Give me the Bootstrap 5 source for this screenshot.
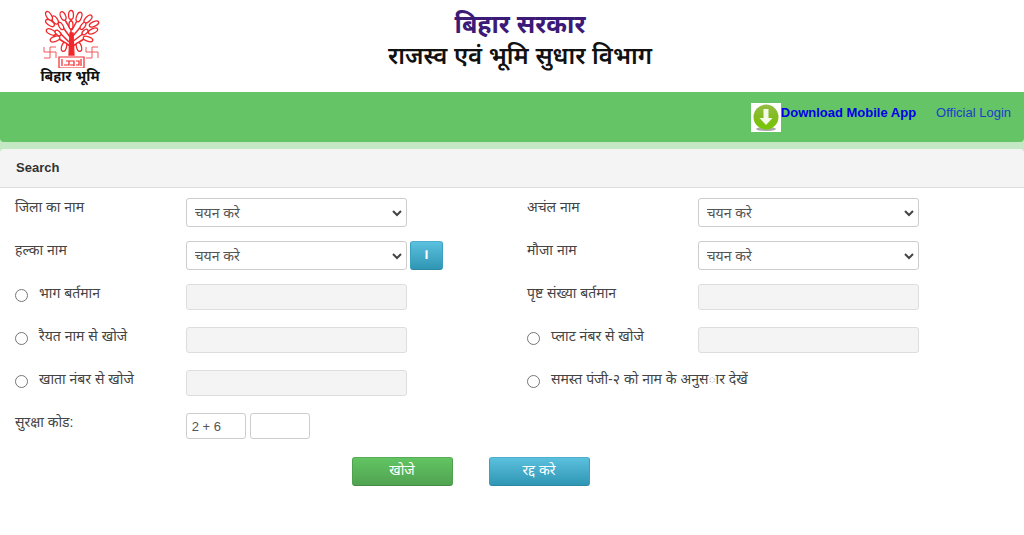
<!DOCTYPE html>
<html lang="hi">
<head>
<meta charset="utf-8">
<meta name="viewport" content="width=device-width, initial-scale=1">
<title>बिहार भूमि</title>
<link href="https://cdn.jsdelivr.net/npm/bootstrap@5.3.0/dist/css/bootstrap.min.css" rel="stylesheet">
<style>
body{font-family:"Liberation Sans","Noto Sans Devanagari","Noto Sans",sans-serif;font-size:14px;line-height:20px;color:#444;background:#fff}
.masthead{height:92px}
.brand-mark{width:60px;margin-left:40px;padding-top:8px}
.brand-name{font-size:14px;line-height:16px;font-weight:700;color:#111}
.dept{padding:8px 0 0 16px}
.dept-gov{font-size:25px;line-height:32px;font-weight:700;color:#3c1a78}
.dept-name{font-size:24px;line-height:32px;font-weight:600;color:#111}
.topbar{height:50px;background:#64c466;border-radius:0 0 4px 4px;font-size:13px;padding:7px 9px 0 0}
.topbar a{color:#1a3fc4;line-height:20px}
.topbar a.app-link{color:#0000e6}
.band{background:#c3e8c3;padding-top:7px}
.panel-top{height:39px;background:#f4f4f4;border-bottom:1px solid #ddd;border-radius:4px 4px 0 0;padding:9px 16px;font-weight:700;color:#333;margin:0;font-size:13px;line-height:20px}
.cell{padding-left:15px}
.line{height:43px}
.search-form{padding-top:9px}
.ctrl{padding-top:1px}
.text-label{font-size:14px;line-height:20px}
.form-select,.form-control{font-size:14px;line-height:20px;color:#555;border-color:#ccc;border-radius:3px;padding:0 8px;box-shadow:none}
.form-select{height:29px;background-size:12px 12px;background-position:right 3px center;background-image:url("data:image/svg+xml,%3Csvg xmlns='http://www.w3.org/2000/svg' viewBox='0 0 12 12'%3E%3Cpath d='M2 4l4 4 4-4' fill='none' stroke='%23444' stroke-width='2'/%3E%3C/svg%3E")}
.form-control{height:26px;padding:0 5px;font-size:13px}
.form-control:disabled{background:#f4f4f4;border-color:#ddd}
.field{width:221px}
.code{width:60px}
.pick{width:13px;height:13px;margin:6px 11px 0 0}
.btn{font-size:14px;line-height:20px;height:29px;color:#fff;border-radius:3px;padding:0 0 4px;border:1px solid}
.btn-find{background:linear-gradient(#62c462,#51a351);border-color:#57ab57 #4fa14f #458c45}
.btn-sky{background:linear-gradient(#5bc0de,#2f96b4);border-color:#4db0ce #3aa0bf #2b89a5}
.btn-wide{width:101px}
.btn-info-mark{width:33px;font-weight:700}
.info-group{gap:3px}
.actions{gap:36px;margin-right:83px;padding-top:2px}
</style>
</head>
<body>
<header class="masthead row g-0">
  <div class="col-2">
    <div class="brand-mark text-center">
      <svg width="60" height="60" viewBox="0 0 60 60" class="d-block" fill="none" stroke="#f0282c" stroke-width="1.3" aria-hidden="true">
        <path d="M31 47V12M29 34L17 22M30 38L13 27M30 29L19 14M31 22l-6-10M32 29l12-14M32 34l16-12M33 38l14-9M32 22l6-11" stroke-width="1.5"/>
        <path d="M29 47l1-22h3l1 22z" fill="#f0282c"/>
        <g fill="#fff">
          <ellipse cx="31" cy="7" rx="2.500" ry="4.500"/>
          <ellipse cx="31" cy="17" rx="2" ry="4"/>
          <ellipse cx="23" cy="8" rx="2.500" ry="4.500" transform="rotate(-25 23 8)"/>
          <ellipse cx="15" cy="12" rx="2.500" ry="4.500" transform="rotate(-35 15 12)"/>
          <ellipse cx="9" cy="8" rx="2.500" ry="5" transform="rotate(-30 9 8)"/>
          <ellipse cx="10" cy="15" rx="2.500" ry="5" transform="rotate(-55 10 15)"/>
          <ellipse cx="21" cy="18" rx="2" ry="4" transform="rotate(-30 21 18)"/>
          <ellipse cx="11" cy="24" rx="2.500" ry="5" transform="rotate(-65 11 24)"/>
          <ellipse cx="18" cy="25" rx="2" ry="3.500" transform="rotate(-50 18 25)"/>
          <ellipse cx="15" cy="31" rx="2.500" ry="5" transform="rotate(70 15 31)"/>
          <ellipse cx="24" cy="39" rx="2.500" ry="4.500" transform="rotate(15 24 39)"/>
          <ellipse cx="39" cy="9" rx="2.500" ry="5" transform="rotate(20 39 9)"/>
          <ellipse cx="48" cy="11" rx="2.500" ry="5" transform="rotate(45 48 11)"/>
          <ellipse cx="54" cy="16" rx="2.300" ry="5" transform="rotate(65 54 16)"/>
          <ellipse cx="43" cy="18" rx="2" ry="4" transform="rotate(35 43 18)"/>
          <ellipse cx="53" cy="23" rx="2.300" ry="5" transform="rotate(65 53 23)"/>
          <ellipse cx="45" cy="24" rx="2" ry="3.500" transform="rotate(50 45 24)"/>
          <ellipse cx="48" cy="31" rx="2.300" ry="5" transform="rotate(-70 48 31)"/>
          <ellipse cx="39" cy="39" rx="2.500" ry="4.500" transform="rotate(-15 39 39)"/>
        </g>
        <g stroke-width="1" stroke="#f2575a">
          <path d="M10 39v11M4 44h12M10 39h6M16 44v6M10 50H4M4 44v-5"/>
          <path d="M52 39v11M46 44h12M52 39h6M58 44v6M52 50h-6M46 44v-5"/>
        </g>
        <path d="M19 49h25v11H19zM22 51v7M41 51v7M24 57h5v-4h-3M29 53h5v4h-4M34 53v5M36 57h3v-4h-3" stroke-width="1.200"/>
      </svg>
      <div class="brand-name text-nowrap">बिहार भूमि</div>
    </div>
  </div>
  <div class="col-8 text-center dept">
    <div class="dept-gov">बिहार सरकार</div>
    <div class="dept-name">राजस्व एवं भूमि सुधार विभाग</div>
  </div>
</header>

<div class="band pt-0">
  <nav class="topbar d-flex justify-content-end align-items-start">
    <a href="#" class="app-link d-flex text-decoration-none fw-bold me-3">
      <svg class="mt-1" width="30" height="29" viewBox="0 0 30 29" aria-hidden="true">
        <defs><linearGradient id="lime" x2="0" y2="1"><stop stop-color="#94bd45"/><stop offset=".5" stop-color="#82bb20"/><stop offset="1" stop-color="#75c800"/></linearGradient></defs>
        <path fill="#fff" d="M0 0h30v29H0z"/>
        <ellipse cx="15" cy="26" rx="10" ry="2" fill="#aaa"/>
        <circle cx="15" cy="14" r="12.5" fill="url(#lime)"/>
        <path d="M12.500 6h5v9h4L15 22l-6.500-7h4z" fill="#f4faea"/>
      </svg>
      <span class="mt-1">Download Mobile App</span>
    </a>
    <a href="#" class="text-decoration-none mt-1 mx-1">Official Login</a>
  </nav>
</div>

<main>
  <div class="band"><h1 class="panel-top">Search</h1></div>
  <form class="search-form">
    <div class="row g-0 line">
      <label class="col-2 cell text-label" for="district">जिला का नाम</label>
      <div class="col-4 cell ctrl"><select class="form-select field" id="district"><option>चयन करे</option></select></div>
      <label class="col-2 cell text-label" for="circle">अचंल नाम</label>
      <div class="col-4 cell ctrl"><select class="form-select field" id="circle"><option>चयन करे</option></select></div>
    </div>
    <div class="row g-0 line">
      <label class="col-2 cell text-label" for="halka">हल्का नाम</label>
      <div class="col-4 cell ctrl d-flex info-group"><select class="form-select field" id="halka"><option>चयन करे</option></select><button type="button" class="btn btn-sky btn-info-mark">।</button></div>
      <label class="col-2 cell text-label" for="mauja">मौजा नाम</label>
      <div class="col-4 cell ctrl"><select class="form-select field" id="mauja"><option>चयन करे</option></select></div>
    </div>
    <div class="row g-0 line">
      <div class="col-2 cell d-flex align-items-start"><input class="pick" type="radio" name="mode" id="m1"><label class="text-label" for="m1">भाग बर्तमान</label></div>
      <div class="col-4 cell ctrl"><input class="form-control field" disabled aria-label="भाग बर्तमान"></div>
      <label class="col-2 cell text-label" for="pageno">पृष्ट संख्या बर्तमान</label>
      <div class="col-4 cell ctrl"><input class="form-control field" disabled id="pageno"></div>
    </div>
    <div class="row g-0 line">
      <div class="col-2 cell d-flex align-items-start"><input class="pick" type="radio" name="mode" id="m2"><label class="text-label" for="m2">रैयत नाम से खोजे</label></div>
      <div class="col-4 cell ctrl"><input class="form-control field" disabled aria-label="रैयत नाम"></div>
      <div class="col-2 cell d-flex align-items-start"><input class="pick" type="radio" name="mode" id="m3"><label class="text-label" for="m3">प्लाट नंबर से खोजे</label></div>
      <div class="col-4 cell ctrl"><input class="form-control field" disabled aria-label="प्लाट नंबर"></div>
    </div>
    <div class="row g-0 line">
      <div class="col-2 cell d-flex align-items-start"><input class="pick" type="radio" name="mode" id="m4"><label class="text-label" for="m4">खाता नंबर से खोजे</label></div>
      <div class="col-4 cell ctrl"><input class="form-control field" disabled aria-label="खाता नंबर"></div>
      <div class="col-6 cell d-flex align-items-start"><input class="pick" type="radio" name="mode" id="m5"><label class="text-label" for="m5">समस्त पंजी-२ को नाम के अनुस◌ार देखें</label></div>
    </div>
    <div class="row g-0 line">
      <label class="col-2 cell text-label" for="answer">सुरक्षा कोड:</label>
      <div class="col-4 cell ctrl d-flex align-items-start"><input class="form-control code me-1" value="2 + 6" aria-label="कोड" readonly><input class="form-control code" id="answer"></div>
    </div>
    <div class="actions d-flex justify-content-center">
      <button type="submit" class="btn btn-find btn-wide">खोजे</button>
      <button type="reset" class="btn btn-sky btn-wide">रद्द करे</button>
    </div>
  </form>
</main>
<script src="https://cdn.jsdelivr.net/npm/bootstrap@5.3.0/dist/js/bootstrap.bundle.min.js"></script>
</body>
</html>
